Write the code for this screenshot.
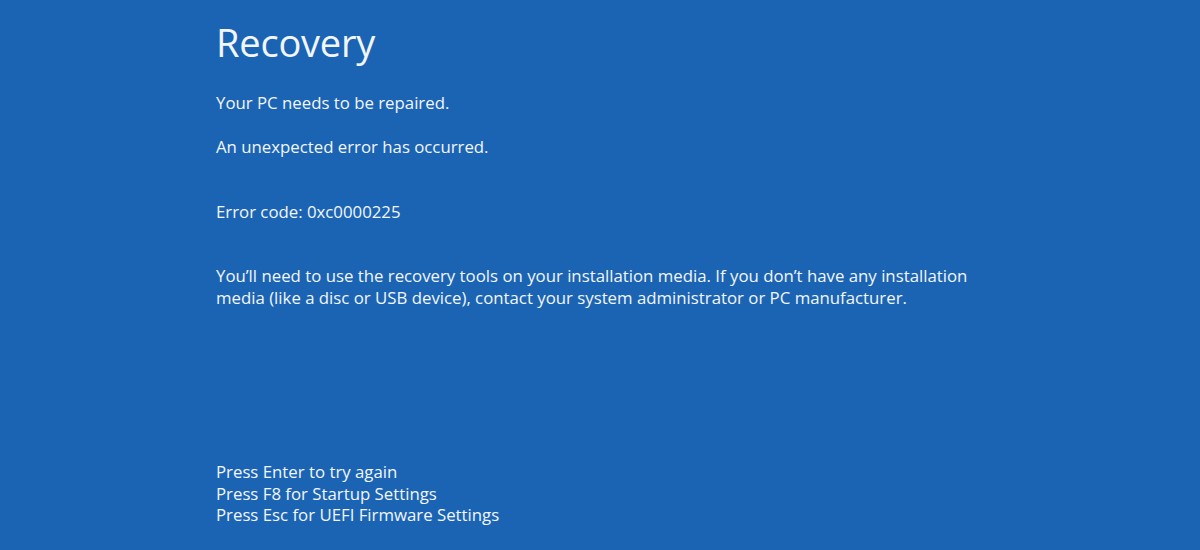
export default function App() {
  return (
    <div
      className="w-[1200px] h-[550px] bg-[#1b64b4] text-[#f2f6fb] pl-[216px] overflow-hidden"
      style={{ fontFamily: '"Open Sans", "Noto Sans", sans-serif' }}
    >
      <div className="pt-[18px] text-[38px] leading-[48px] tracking-[-0.2px]">Recovery</div>
      <div className="text-[16.8px] leading-[22px]">
        <div className="mt-[26px]">Your PC needs to be repaired.</div>
        <div className="mt-[22px]">An unexpected error has occurred.</div>
        <div className="mt-[43px]">Error code: 0xc0000225</div>
        <div className="mt-[42px]">
          <div>You’ll need to use the recovery tools on your installation media. If you don’t have any installation</div>
          <div>media (like a disc or USB device), contact your system administrator or PC manufacturer.</div>
        </div>
        <div className="mt-[152px]">
          <div className="leading-[21.5px]">Press Enter to try again</div>
          <div className="leading-[21.5px]">Press F8 for Startup Settings</div>
          <div className="leading-[21.5px]">Press Esc for UEFI Firmware Settings</div>
        </div>
      </div>
    </div>
  );
}
